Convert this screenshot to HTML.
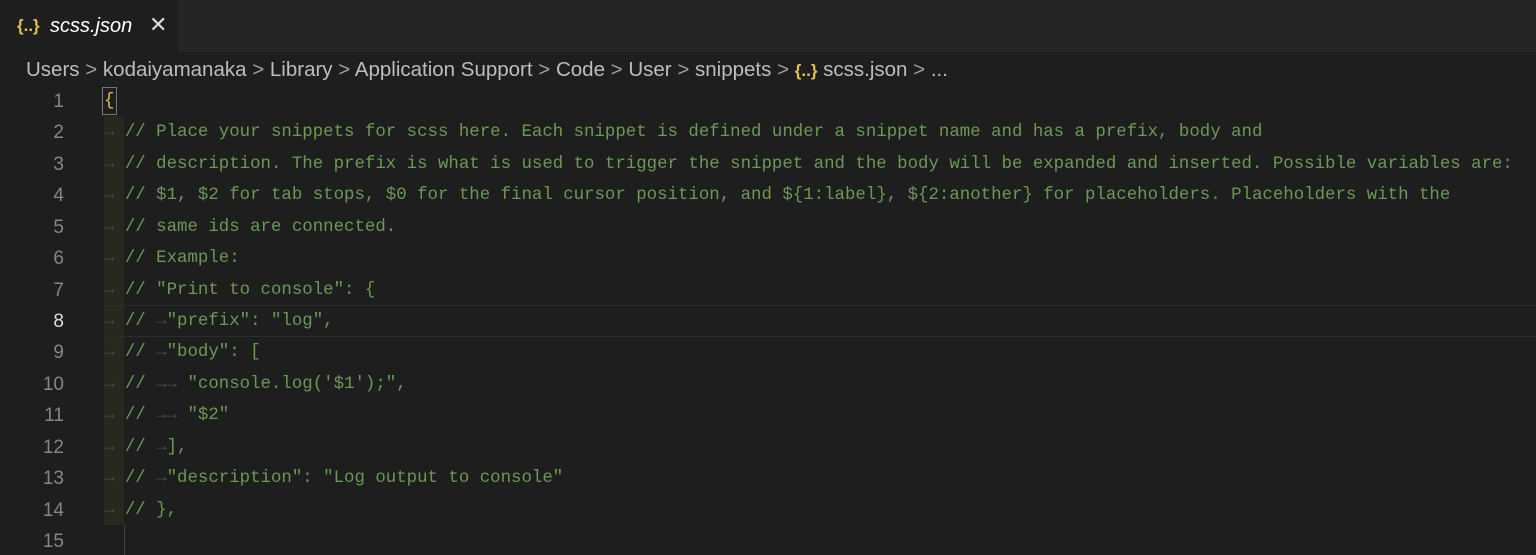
<!DOCTYPE html>
<html><head><style>
body{margin:0;width:1536px;height:555px;background:#1e1e1e;overflow:hidden;font-family:"Liberation Sans",sans-serif;}
.tabbar{position:absolute;left:0;top:0;width:1536px;height:52px;background:#252526;}
.tab{position:absolute;left:0;top:0;width:178px;height:52px;background:#1e1e1e;color:#fff;font-size:20px;}
.tab .ic{position:absolute;left:17px;top:16px;color:#e2c04a;font-size:17px;font-weight:bold;}
.tab .nm{position:absolute;left:50px;top:15px;font-style:italic;}
.tab .x{position:absolute;left:149px;top:12px;font-size:22px;color:#ddd;}
.bc{position:absolute;left:26px;top:58px;color:#bdbdbd;font-size:20.5px;white-space:pre;}
.bc .s{color:#a0a0a0;font-weight:300;}
.bc .b{color:#e2c04a;font-weight:bold;font-size:17px;}
.ln{position:absolute;left:0;width:64px;text-align:right;color:#858585;font-family:"Liberation Sans",sans-serif;font-size:19px;}
.code{position:absolute;left:104px;font-family:"Liberation Mono",monospace;font-size:17.4px;color:#6a9955;white-space:pre;}
.ind{position:absolute;left:104px;top:116px;width:20px;height:409px;background:#28281f;}
.guide{position:absolute;left:124px;top:525px;width:1px;height:30px;background:#444;}
.cur{position:absolute;left:104px;top:305px;width:1432px;height:30px;border-top:1px solid #2c2c2c;border-bottom:1px solid #2c2c2c;}
.ar{color:#4a4a4a;}
</style></head><body>
<div class="tabbar"><div class="tab"><span class="ic">{..}</span><span class="nm">scss.json</span><span class="x">✕</span></div></div>
<div class="bc">Users <span class="s">&gt;</span> kodaiyamanaka <span class="s">&gt;</span> Library <span class="s">&gt;</span> Application Support <span class="s">&gt;</span> Code <span class="s">&gt;</span> User <span class="s">&gt;</span> snippets <span class="s">&gt;</span> <span class="b">{..}</span> scss.json <span class="s">&gt;</span> ...</div>
<div class="ind"></div><div class="guide"></div><div class="cur"></div>
<div style="position:absolute;left:102px;top:87px;width:13px;height:26px;border:1px solid #777;"></div>
<div id="L"></div>
<script>
var lines=[
'<span style="color:#e2c04a">{</span>',
'<span class="ar">→</span> // Place your snippets for scss here. Each snippet is defined under a snippet name and has a prefix, body and',
'<span class="ar">→</span> // description. The prefix is what is used to trigger the snippet and the body will be expanded and inserted. Possible variables are:',
'<span class="ar">→</span> // $1, $2 for tab stops, $0 for the final cursor position, and ${1:label}, ${2:another} for placeholders. Placeholders with the',
'<span class="ar">→</span> // same ids are connected.',
'<span class="ar">→</span> // Example:',
'<span class="ar">→</span> // "Print to console": {',
'<span class="ar">→</span> // <span class="ar">→</span>"prefix": "log",',
'<span class="ar">→</span> // <span class="ar">→</span>"body": [',
'<span class="ar">→</span> // <span class="ar">→→</span> "console.log(\'$1\');",',
'<span class="ar">→</span> // <span class="ar">→→</span> "$2"',
'<span class="ar">→</span> // <span class="ar">→</span>],',
'<span class="ar">→</span> // <span class="ar">→</span>"description": "Log output to console"',
'<span class="ar">→</span> // },',
''];
var h='';
for(var i=0;i<lines.length;i++){var t=92+i*31.43;
h+='<div class="ln" style="top:'+(t-1)+'px;'+(i==7?'color:#ddd':'')+'">'+(i+1)+'</div>';
h+='<div class="code" style="top:'+t+'px">'+lines[i]+'</div>';}
document.getElementById('L').innerHTML=h;
</script>
</body></html>
